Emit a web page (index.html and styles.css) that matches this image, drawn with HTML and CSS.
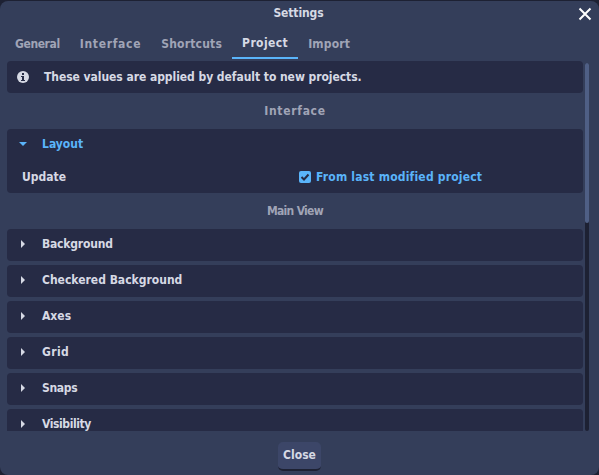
FILE: index.html
```html
<!DOCTYPE html>
<html lang="en">
<head>
<meta charset="utf-8">
<title>Settings</title>
<link rel="stylesheet" href="styles.css">
</head>
<body>
<div class="dialog">
  <header class="title-bar">
    <span class="title">Settings</span>
    <button class="close-x" aria-label="Close">
      <svg width="14" height="14" viewBox="0 0 14 14"><path d="M1.500 1.500 12.500 12.500M12.500 1.500 1.500 12.500" stroke="#fff" stroke-width="2" fill="none"/></svg>
    </button>
  </header>
  <nav class="tabs">
    <span class="tab sp-n4">General</span>
    <span class="tab sp-p7">Interface</span>
    <span class="tab sp-p2">Shortcuts</span>
    <span class="tab sp-p4 active">Project</span>
    <span class="tab sp-p2">Import</span>
  </nav>
  <div class="body">
    <div class="content">
      <div class="panel info">
        <svg class="info-icon" width="12" height="12" viewBox="0 0 12 12"><circle cx="6" cy="6" r="6" fill="#d6d9e4"/><rect x="5" y="2" width="2" height="2" fill="#262b45"/><path d="M4 5h3v4h1v1H4V9h1V6H4z" fill="#262b45"/></svg>
        <span class="sp-n1">These values are applied by default to new projects.</span>
      </div>
      <div class="section sp-p7">Interface</div>
      <div class="panel layout">
        <div class="row-head open">
          <svg class="caret" width="10" height="10" viewBox="0 0 10 10"><path d="M1 3h8L5 7z" fill="#5ab4fa"/></svg>
          <span>Layout</span>
        </div>
        <div class="option">
          <span class="opt-label">Update</span>
          <span class="opt-value">
            <svg width="12" height="12" viewBox="0 0 12 12"><rect width="12" height="12" rx="2" fill="#5ab4fa"/><path d="M2.500 6 5 8.500 9.500 3.500" stroke="#262b45" stroke-width="2" fill="none"/></svg>
            <span class="sp-p2">From last modified project</span>
          </span>
        </div>
      </div>
      <div class="section sp-n7">Main View</div>
      <div class="stack">
        <div class="panel row-head"><svg class="caret" width="10" height="10" viewBox="0 0 10 10"><path d="M3 1v8l4-4z" fill="#d6d9e4"/></svg><span class="sp-n2">Background</span></div>
        <div class="panel row-head"><svg class="caret" width="10" height="10" viewBox="0 0 10 10"><path d="M3 1v8l4-4z" fill="#d6d9e4"/></svg><span>Checkered Background</span></div>
        <div class="panel row-head"><svg class="caret" width="10" height="10" viewBox="0 0 10 10"><path d="M3 1v8l4-4z" fill="#d6d9e4"/></svg><span>Axes</span></div>
        <div class="panel row-head"><svg class="caret" width="10" height="10" viewBox="0 0 10 10"><path d="M3 1v8l4-4z" fill="#d6d9e4"/></svg><span class="sp-p4">Grid</span></div>
        <div class="panel row-head"><svg class="caret" width="10" height="10" viewBox="0 0 10 10"><path d="M3 1v8l4-4z" fill="#d6d9e4"/></svg><span class="sp-n3">Snaps</span></div>
        <div class="panel row-head"><svg class="caret" width="10" height="10" viewBox="0 0 10 10"><path d="M3 1v8l4-4z" fill="#d6d9e4"/></svg><span class="sp-n4">Visibility</span></div>
      </div>
    </div>
    <div class="scrollbar"><div class="thumb"></div></div>
  </div>
  <footer class="footer"><button class="btn">Close</button></footer>
</div>
</body>
</html>
```
FILE: styles.css
```css
* { box-sizing: border-box; }
html, body { margin: 0; height: 100%; background: #1d2133; }
body {
  font: bold 12px/16px "DejaVu Sans Condensed", "DejaVu Sans", sans-serif;
  font-stretch: condensed;
  color: #d6d9e4;
  overflow: hidden;
}
.sp-n7 { letter-spacing: -0.7px; }
.sp-n4 { letter-spacing: -0.4px; }
.sp-n3 { letter-spacing: -0.3px; }
.sp-n2 { letter-spacing: -0.2px; }
.sp-n1 { letter-spacing: -0.05px; }
.sp-p2 { letter-spacing: 0.2px; }
.sp-p4 { letter-spacing: 0.4px; }
.sp-p7 { letter-spacing: 0.7px; }
.dialog {
  margin-top: 1px;
  padding-top: 1px;
  height: 474px;
  background: #343e5a;
  border-radius: 8px;
  display: flex;
  flex-direction: column;
}
.title-bar {
  height: 24px;
  flex: none;
  display: flex;
  align-items: center;
  justify-content: center;
  position: relative;
  padding: 0 2px 2px 0;
}
.title { letter-spacing: -0.1px; }
.close-x {
  position: absolute;
  right: 7px;
  top: 5px;
  width: 14px;
  height: 14px;
  padding: 0;
  border: 0;
  background: none;
  display: flex;
}
.tabs {
  flex: none;
  height: 33px;
  display: flex;
  align-items: stretch;
  padding-left: 5px;
}
.tab {
  padding: 10px 10px 0;
  color: #a0a4b6;
  border-bottom: 2px solid transparent;
}
.tab.active {
  color: #d6d9e4;
  border-bottom-color: #5ab4fa;
  padding-top: 9px;
}
.body {
  flex: none;
  height: 370px;
  margin-top: 2px;
  display: flex;
  padding-left: 7px;
  overflow: hidden;
}
.content {
  width: 576px;
  flex: none;
}
.panel {
  background: #262b45;
  border-radius: 4px;
}
.info {
  height: 32px;
  display: flex;
  align-items: center;
  gap: 15px;
  padding-left: 10px;
}
.section {
  height: 36px;
  display: flex;
  align-items: center;
  justify-content: center;
  color: #a0a4b6;
}
.layout { height: 64px; }
.row-head {
  height: 32px;
  display: flex;
  align-items: center;
  padding: 0 0 2px 11px;
  gap: 14px;
}
.row-head.open { color: #5ab4fa; }
.option {
  height: 32px;
  display: flex;
  align-items: center;
  padding-left: 15px;
}
.opt-label { width: 277px; }
.opt-value {
  color: #5ab4fa;
  display: flex;
  align-items: center;
  gap: 5px;
}
.stack {
  display: flex;
  flex-direction: column;
  gap: 4px;
}
.stack .panel { flex: none; }
.scrollbar {
  margin: 2px 0 0 2px;
  width: 4px;
  background: #1d2133;
  border-radius: 2px;
}
.thumb {
  height: 160px;
  background: #4f5f85;
  border-radius: 2px;
}
.footer {
  flex: 1;
  display: flex;
  justify-content: center;
  padding-top: 11px;
}
.btn {
  width: 43px;
  height: 29px;
  padding: 0 0 2px;
  border: 0;
  border-bottom: 2px solid #1d2133;
  border-radius: 5px;
  background: #3c4668;
  color: #d6d9e4;
  font: inherit;
  font-stretch: condensed;
}
```
